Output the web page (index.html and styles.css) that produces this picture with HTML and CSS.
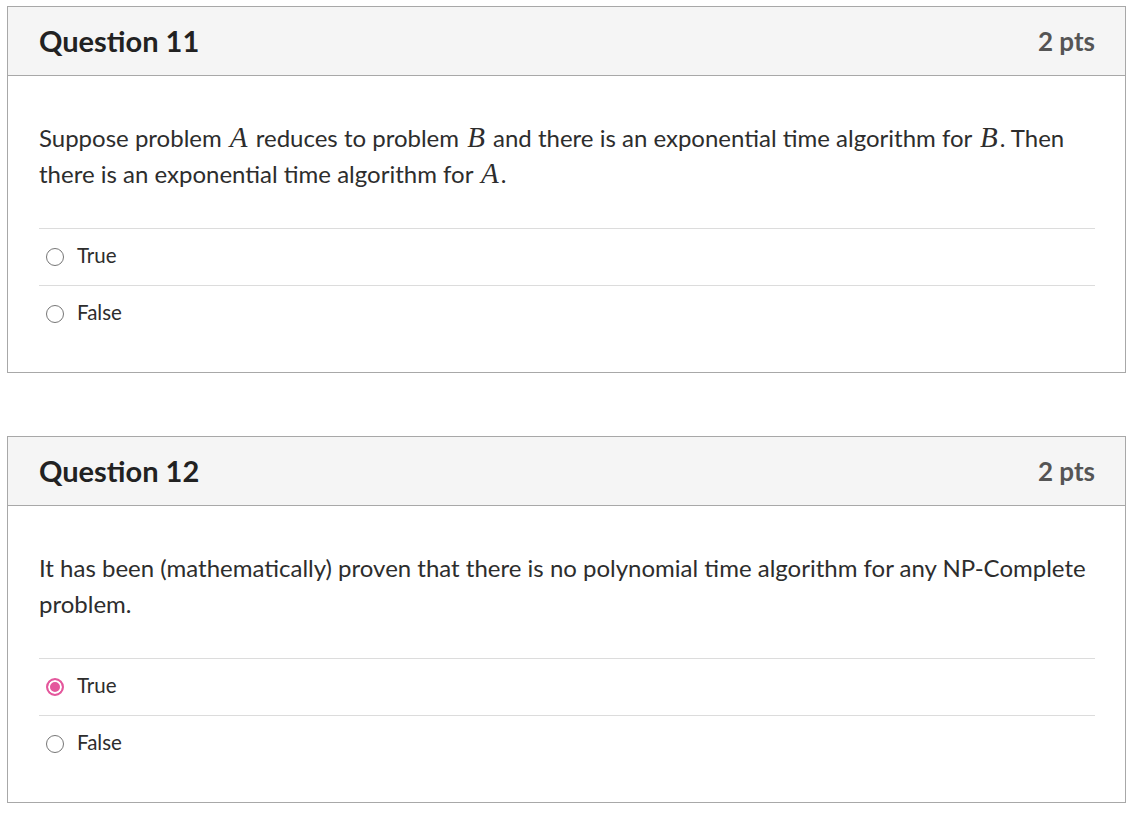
FILE: index.html
```html
<!DOCTYPE html>
<html>
<head>
<meta charset="utf-8">
<link rel="stylesheet" href="styles.css">
</head>
<body>
<div class="question">
  <div class="q-header">
    <h2 class="q-title">Question 11</h2>
    <div class="q-points">2 pts</div>
  </div>
  <div class="q-body">
    <div class="q-text">Suppose problem <span class="math">A</span> reduces to problem <span class="math">B</span> and there is an exponential time algorithm for <span class="math">B</span>. Then there is an exponential time algorithm for <span class="math">A</span>.</div>
    <div class="answers">
      <div class="answer"><span class="radio"></span><span class="label">True</span></div>
      <div class="answer"><span class="radio"></span><span class="label">False</span></div>
    </div>
  </div>
</div>
<div class="question">
  <div class="q-header">
    <h2 class="q-title">Question 12</h2>
    <div class="q-points">2 pts</div>
  </div>
  <div class="q-body">
    <div class="q-text">It has been (mathematically) proven that there is no polynomial time algorithm for any NP-Complete problem.</div>
    <div class="answers">
      <div class="answer"><span class="radio checked"></span><span class="label">True</span></div>
      <div class="answer"><span class="radio"></span><span class="label">False</span></div>
    </div>
  </div>
</div>
</body>
</html>
```
FILE: styles.css
```css
html, body { margin: 0; padding: 0; background: #fff; }
body {
  font-family: Lato, "Noto Sans", sans-serif;
  color: #2d2d2d;
  padding: 6px 18px 0 7px;
}
.question {
  border: 1px solid #a8a8a8;
  margin-bottom: 63px;
}
.q-header {
  background: #f5f5f5;
  border-bottom: 1px solid #a8a8a8;
  height: 68px;
  display: flex;
  align-items: center;
  justify-content: space-between;
  padding: 0 30px 0 31px;
}
.q-title {
  margin: 0;
  font-size: 29px;
  font-weight: 700;
  color: #222;
  position: relative;
  top: -1px;
}
.q-points {
  font-size: 26px;
  font-weight: 700;
  color: #555;
}
.q-body {
  padding: 45px 30px 30px 31px;
}
.q-text {
  font-size: 24px;
  line-height: 36px;
  position: relative;
  top: -1px;
}
.math {
  font-family: "Liberation Serif", "DejaVu Serif", serif;
  font-style: italic;
  font-size: 29px;
  line-height: 0;
  margin: 0 2px;
}
.answers { margin-top: 35px; }
.answer {
  border-top: 1px solid #dcdcdc;
  height: 56px;
  display: flex;
  align-items: center;
  padding-left: 7px;
}
.radio {
  width: 18px;
  height: 18px;
  box-sizing: border-box;
  border: 1.5px solid #767676;
  border-radius: 50%;
  margin-right: 13px;
  flex: none;
}
.radio.checked {
  border: 2px solid #e4579c;
  background: #e4579c;
  box-shadow: inset 0 0 0 2px #fff;
}
.label {
  font-size: 20.5px;
  line-height: 24px;
  position: relative;
  top: -2px;
}
```
